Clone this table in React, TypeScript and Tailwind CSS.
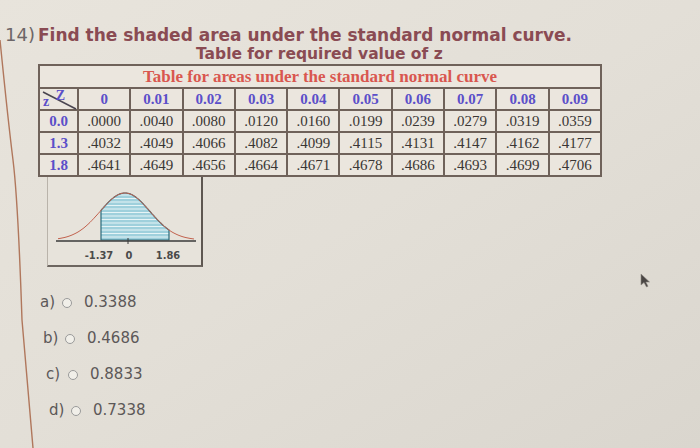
import React from 'react';

const cols = ['0', '0.01', '0.02', '0.03', '0.04', '0.05', '0.06', '0.07', '0.08', '0.09'];
const rows = [
  { z: '0.0', v: ['.0000', '.0040', '.0080', '.0120', '.0160', '.0199', '.0239', '.0279', '.0319', '.0359'] },
  { z: '1.3', v: ['.4032', '.4049', '.4066', '.4082', '.4099', '.4115', '.4131', '.4147', '.4162', '.4177'] },
  { z: '1.8', v: ['.4641', '.4649', '.4656', '.4664', '.4671', '.4678', '.4686', '.4693', '.4699', '.4706'] },
];
const options = [
  { k: 'a)', v: '0.3388', pad: 'pl-[40px]' },
  { k: 'b)', v: '0.4686', pad: 'pl-[43px]' },
  { k: 'c)', v: '0.8833', pad: 'pl-[46px]' },
  { k: 'd)', v: '0.7338', pad: 'pl-[49px]' },
];

const mu = 77;
const base = 63;
const curveY = (x: number) => base - 47 * Math.exp(-((x - mu) ** 2) / (2 * 25 * 25));

function BellCurve() {
  const pts: string[] = [];
  for (let x = 10; x <= 146; x += 2) pts.push(`${x},${curveY(x).toFixed(1)}`);
  const shade: string[] = [`53,${base}`];
  for (let x = 53; x <= 121; x += 1) shade.push(`${x},${curveY(x).toFixed(1)}`);
  shade.push(`121,${base}`);
  const stripes = [];
  for (let y = 18; y < base; y += 3.5) stripes.push(y);
  return (
    <svg width="155" height="90" viewBox="0 0 155 90">
      <defs>
        <clipPath id="sh">
          <polygon points={shade.join(' ')} />
        </clipPath>
      </defs>
      <polygon points={shade.join(' ')} fill="#9fd0dc" />
      <g clipPath="url(#sh)">
        {stripes.map((y) => (
          <line key={y} x1="50" x2="125" y1={y} y2={y} stroke="#e6f4f6" strokeWidth="1" />
        ))}
      </g>
      <polygon points={shade.join(' ')} fill="none" stroke="#2d6a7a" strokeWidth="1.2" />
      <polyline points={pts.join(' ')} fill="none" stroke="#c2624e" strokeWidth="1" />
      <line x1="8" x2="148" y1={base + 1} y2={base + 1} stroke="#3a3a3a" strokeWidth="1.3" />
      <line x1={mu + 3} x2={mu + 3} y1={base - 2} y2={base + 4} stroke="#3a3a3a" strokeWidth="1" />
      <g fontFamily="'DejaVu Sans Condensed', 'DejaVu Sans', sans-serif" fontWeight="bold" fontSize="11" fill="#4a4a4a">
        <text x="51" y="82" textAnchor="middle">-1.37</text>
        <text x="81" y="82" textAnchor="middle">0</text>
        <text x="120" y="82" textAnchor="middle">1.86</text>
      </g>
    </svg>
  );
}

export default function App() {
  return (
    <div className="relative w-[700px] h-[448px] overflow-hidden bg-gradient-to-br from-[#e8e4dc] via-[#e3dfd7] to-[#dad6ce] font-['DejaVu_Sans',sans-serif]">
      <svg className="absolute left-0 top-0 pointer-events-none" width="700" height="448">
        <path d="M0 40 Q 8 120 13 160 T 22 320 L 33 448" fill="none" stroke="#b0775c" strokeWidth="1.4" />
      </svg>

      <div className="pt-[25px] pl-[5px] flex items-baseline text-[17px] leading-[20px] font-bold">
        <span className="text-[#6d6668] font-normal text-[18px] mr-[3px]">14)</span>
        <span className="text-[#8a4b53]">Find the shaded area under the standard normal curve.</span>
      </div>
      <div className="pl-[196px] text-[15.5px] leading-[18px] font-bold text-[#8a4b53]">Table for required value of z</div>

      <div className="ml-[38px] mt-[1px] w-[564px] font-['Liberation_Serif',serif]">
        <table className="border-collapse border-2 border-[#6f625a] bg-[#ebe6de] w-full">
          <thead>
            <tr className="h-[23px]">
              <th colSpan={11} className="border-2 border-[#6f625a] text-[17px] font-bold text-[#d9574f] leading-none">
                Table for areas under the standard normal curve
              </th>
            </tr>
            <tr className="h-[22px]">
              <th className="border-2 border-[#6f625a] w-[39px] relative p-0">
                <svg className="absolute inset-0" width="39" height="22" viewBox="0 0 39 22">
                  <line x1="3" y1="3" x2="36" y2="20" stroke="#4a4550" strokeWidth="1.5" />
                </svg>
                <span className="absolute left-[3px] bottom-[0px] text-[14px] text-[#5b4fc9] leading-none">z</span>
                <span className="absolute right-[12px] top-[0px] text-[14px] text-[#5b4fc9] leading-none">Z</span>
              </th>
              {cols.map((c) => (
                <th key={c} className="border-2 border-[#6f625a] text-[15px] font-bold text-[#5b4fc9] leading-none p-0">
                  {c}
                </th>
              ))}
            </tr>
          </thead>
          <tbody>
            {rows.map((r) => (
              <tr key={r.z} className="h-[22px]">
                <td className="border-2 border-[#6f625a] text-center text-[15px] font-bold text-[#5b4fc9] leading-none p-0">{r.z}</td>
                {r.v.map((v, i) => (
                  <td key={i} className="border-2 border-[#6f625a] text-center text-[15px] text-[#3a3634] leading-none p-0">
                    {v}
                  </td>
                ))}
              </tr>
            ))}
          </tbody>
        </table>
      </div>

      <div className="ml-[47px] w-[156px] h-[90px] bg-[#e7e3db] border-l border-[#b9b3aa] border-r-2 border-b-2 border-r-[#5e5751] border-b-[#6d6660]">
        <BellCurve />
      </div>

      <div className="mt-[26px] flex flex-col gap-[17px] text-[15px] text-[#5c5858]">
        {options.map((o) => (
          <div key={o.k} className={`flex items-center h-[19px] ${o.pad}`}>
            <span className="w-[18px]">{o.k}</span>
            <span className="ml-[4px] w-[10px] h-[10px] rounded-full border border-[#9a9a9a] bg-[#f1efe9]" />
            <span className="ml-[12px]">{o.v}</span>
          </div>
        ))}
      </div>

      <svg className="absolute left-[640px] top-[273px]" width="12" height="16" viewBox="0 0 12 16">
        <path d="M1 1 L1 12 L4 9.5 L6.5 14 L8 13.3 L5.8 9 L9.5 9 Z" fill="#4a4644" stroke="#8c8782" strokeWidth="0.6" />
      </svg>
    </div>
  );
}
